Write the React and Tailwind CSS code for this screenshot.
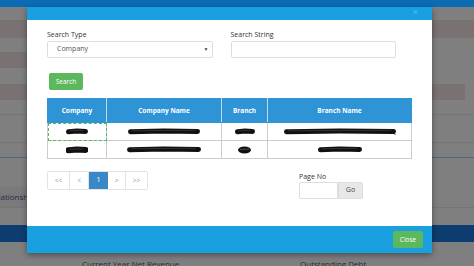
import React, { useState } from 'react';

const font = { fontFamily: '"Open Sans", "Liberation Sans", sans-serif' };

function Scribble({ w, h = 7, blob = false, tail = false }) {
  if (blob) {
    return (
      <svg width={w} height={h} viewBox={`0 0 ${w} ${h}`} className="inline-block align-middle">
        <ellipse cx={w / 2} cy={h / 2} rx={w / 2 - 1} ry={h / 2 - 0.5} fill="#111" />
        <path d={`M3 ${h / 2 - 0.5} L${w - 3} ${h / 2 - 1}`} stroke="#777" strokeWidth="0.6" />
      </svg>
    );
  }
  return (
    <svg width={w} height={h} viewBox={`0 0 ${w} ${h}`} className="inline-block align-middle">
      <path
        d={`M2.5 ${h / 2 + 0.3} L${w * 0.5} ${h / 2 - 0.4} L${w - 2.5} ${h / 2 - 0.1}`}
        stroke="#111"
        strokeWidth={h - 2}
        strokeLinecap="round"
        fill="none"
      />
      <path d={`M4 ${h / 2 - 0.8} L${w - 5} ${h / 2 - 1.2}`} stroke="#555" strokeWidth="0.5" />
      {tail && <path d={`M${w - 9} ${h / 2} L${w - 0.5} ${h - 0.8}`} stroke="#111" strokeWidth="1" />}
    </svg>
  );
}

function BackgroundPage() {
  return (
    <div className="absolute inset-0 flex flex-col bg-[#7f7f7f]" style={font}>
      <div className="h-[7px] bg-[#0b6bb3]" />
      <div className="h-[13px]" />
      <div className="h-[18px] bg-[#7a7272]" />
      <div className="h-[14px]" />
      <div className="h-[16px] bg-[#7a7272] w-[30px]" />
      <div className="h-[16px]" />
      <div className="h-[16px] bg-[#7a7272] w-[465px]" />
      <div className="h-[15px] border-b border-[#757575]" />
      <div className="h-[28px] border-b border-[#757575]" />
      <div className="h-[15px] border-b border-[#4e6680]" />
      <div className="h-[29px]" />
      <div className="h-[20px] flex items-center text-[8px] text-[#2a2a44] bg-[#7a7a7c] w-[27px] overflow-hidden">
        <span className="-ml-[11px]">Relationships</span>
      </div>
      <div className="h-[18px] border-t border-[#757575]" />
      <div className="h-[17px] bg-[#0d3d70]" />
      <div className="flex-1 relative text-[8px] text-[#2c2c2c]">
        <span className="absolute left-[82px] top-[16px]">Current Year Net Revenue</span>
        <span className="absolute left-[300px] top-[16px]">Outstanding Debt</span>
      </div>
    </div>
  );
}

export default function App() {
  const [searchType, setSearchType] = useState('Company');
  const rows = [
    [{ w: 22 }, { w: 72 }, { w: 20 }, { w: 112, tail: true }],
    [{ w: 22, h: 8 }, { w: 74 }, { w: 15, h: 8, blob: true }, { w: 44 }],
  ];

  return (
    <div className="relative w-[474px] h-[266px] overflow-hidden" style={font}>
      <BackgroundPage />

      <div className="absolute left-[27px] top-[7px] w-[405px] h-[246px] flex flex-col shadow-[0_2px_6px_rgba(0,0,0,0.4)]">
        <div className="h-[13px] bg-[#1aa0e1] flex justify-end pr-[14px]">
          <span className="text-[9px] leading-[9px] text-[#5cc0ee]">×</span>
        </div>

        <div className="flex-1 bg-white px-[20px] pt-[10px]">
          <div className="grid grid-cols-2 w-[349px] gap-x-[18px]">
            <div>
              <label className="block text-[7px] leading-[10px] text-[#333]">Search Type</label>
              <div className="relative mt-px">
                <select
                  value={searchType}
                  onChange={(e) => setSearchType(e.target.value)}
                  className="block appearance-none w-full h-[17px] border border-[#ddd] rounded-[2px] pl-[9px] text-[7px] text-[#555] bg-white"
                >
                  <option>Company</option>
                  <option>Branch</option>
                </select>
                <span className="absolute right-[4px] top-[5px] text-[5px] leading-[6px] text-[#444]">▼</span>
              </div>
            </div>
            <div>
              <label className="block text-[7px] leading-[10px] text-[#333]">Search String</label>
              <input className="mt-px block w-full h-[17px] border border-[#ddd] rounded-[2px]" />
            </div>
          </div>

          <button className="block mt-[15px] ml-[2px] w-[34px] h-[17px] bg-[#5cb85c] rounded-[2px] text-white text-[6.5px]">
            Search
          </button>

          <table className="mt-[8px] w-[365px] border-collapse text-[6.5px]">
            <thead>
              <tr className="h-[24px] bg-[#2f94d6] text-white font-bold">
                <th className="w-[59px] border border-[#2f94d6] border-r-[#c5d9e8]">Company</th>
                <th className="w-[115px] border border-[#2f94d6] border-r-[#c5d9e8]">Company Name</th>
                <th className="w-[46px] border border-[#2f94d6] border-r-[#c5d9e8]">Branch</th>
                <th className="border border-[#2f94d6]">Branch Name</th>
              </tr>
            </thead>
            <tbody>
              {rows.map((r, i) => (
                <tr key={i} className="h-[18px]">
                  {r.map((c, j) => (
                    <td
                      key={j}
                      className={
                        i === 0 && j === 0
                          ? 'border border-[#ccc] text-center align-middle leading-none outline-1 outline-dashed outline-[#5cb85c] -outline-offset-1'
                          : 'border border-[#ccc] text-center align-middle leading-none'
                      }
                    >
                      <Scribble {...c} />
                    </td>
                  ))}
                </tr>
              ))}
            </tbody>
          </table>

          <div className="flex mt-[12px]">
            <div className="w-[252px]">
              <div className="flex w-fit h-[19px] border border-[#e3e3e3] rounded-[2px] text-[6.5px] text-[#6f9cc6]">
                <span className="w-[22px] flex items-center justify-center border-r border-[#e3e3e3]">&lt;&lt;</span>
                <span className="w-[19px] flex items-center justify-center border-r border-[#e3e3e3]">&lt;</span>
                <span className="w-[19px] flex items-center justify-center bg-[#3a87c8] text-white text-[7px]">1</span>
                <span className="w-[18px] flex items-center justify-center border-r border-[#e3e3e3]">&gt;</span>
                <span className="w-[21px] flex items-center justify-center">&gt;&gt;</span>
              </div>
            </div>
            <div className="mt-[1px]">
              <label className="block text-[7px] leading-[10px] text-[#333]">Page No</label>
              <div className="flex">
                <input className="w-[39px] h-[17px] border border-[#ddd] rounded-l-[2px]" />
                <button className="w-[25px] h-[17px] bg-[#e8e8e8] border border-[#ddd] rounded-r-[2px] text-[7px] text-[#444]">
                  Go
                </button>
              </div>
            </div>
          </div>
        </div>

        <div className="h-[27px] bg-[#1aa0e1] flex items-center justify-end pr-[9px]">
          <button className="w-[30px] h-[17px] bg-[#5cb85c] rounded-[2px] text-white text-[6.5px]">Close</button>
        </div>
      </div>
    </div>
  );
}
